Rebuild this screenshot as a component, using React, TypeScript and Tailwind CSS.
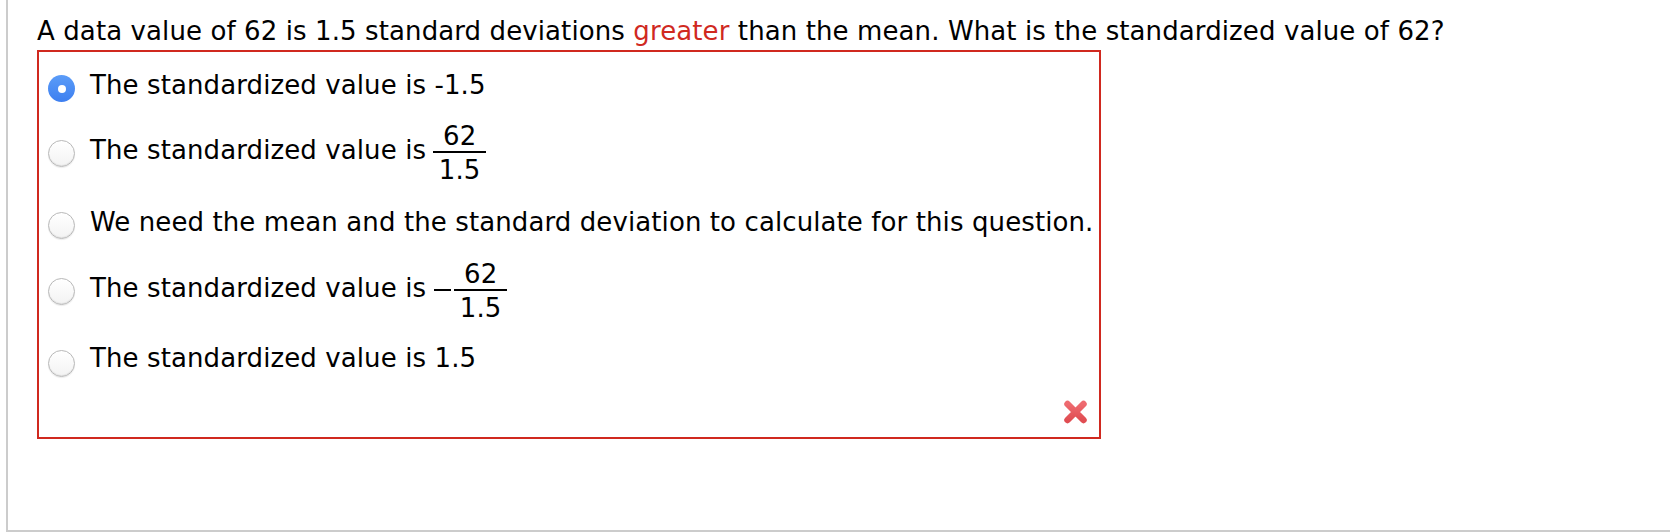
import React from "react";

function Radio({ checked }: { checked?: boolean }) {
  if (checked) {
    return (
      <span className="flex h-[27px] w-[27px] shrink-0 items-center justify-center rounded-full bg-gradient-to-b from-[#5b9cf8] to-[#3d7ff0]">
        <span className="h-[8px] w-[8px] rounded-full bg-white" />
      </span>
    );
  }
  return (
    <span className="block h-[27px] w-[27px] shrink-0 rounded-full border border-[#b8b8b8] bg-gradient-to-b from-white to-[#f3f3f3] shadow-[inset_0_-1px_1px_rgba(0,0,0,0.08),0_1px_1px_rgba(0,0,0,0.08)]" />
  );
}

function Fraction() {
  return (
    <span className="flex flex-col items-center">
      <span className="leading-[30px]">62</span>
      <span className="h-[2px] w-[53px] bg-black" />
      <span className="mt-[2px] leading-[30px]">1.5</span>
    </span>
  );
}

export default function App() {
  return (
    <div
      className="h-[532px] w-full bg-white text-[26px] tracking-[0.1px] text-black"
      style={{ fontFamily: '"DejaVu Sans", Verdana, sans-serif' }}
    >
      <div className="ml-[6px] h-[532px] w-[1664px] border-b-2 border-l-2 border-[#cccccc] pl-[29px] pt-[16px]">
        <p className="leading-[30px] whitespace-nowrap">
          A data value of 62 is 1.5 standard deviations{" "}
          <span className="text-[#d0291f]">greater</span> than the mean. What is the standardized value of 62?
        </p>
        <div className="mt-[4px] flex h-[389px] w-[1064px] flex-col border-2 border-[#d0291f] pl-[9px] pt-[18px]">
          {/* Row 1 */}
          <div className="flex items-start">
            <span className="mt-[5px]">
              <Radio checked />
            </span>
            <span className="ml-[15px] leading-[30px]">The standardized value is -1.5</span>
          </div>
          {/* Row 2 */}
          <div className="mt-[19px] flex items-start">
            <span className="mt-[19px]">
              <Radio />
            </span>
            <span className="ml-[15px] mt-[14px] leading-[30px]">The standardized value is</span>
            <span className="ml-[7px]">
              <Fraction />
            </span>
          </div>
          {/* Row 3 */}
          <div className="mt-[22px] flex items-start">
            <span className="mt-[5px]">
              <Radio />
            </span>
            <span className="ml-[15px] leading-[30px]">
              We need the mean and the standard deviation to calculate for this question.
            </span>
          </div>
          {/* Row 4 */}
          <div className="mt-[20px] flex items-start">
            <span className="mt-[19px]">
              <Radio />
            </span>
            <span className="ml-[15px] mt-[14px] leading-[30px]">The standardized value is</span>
            <span className="ml-[8px] mt-[30px] h-[2px] w-[17px] bg-black" />
            <span className="ml-[3px]">
              <Fraction />
            </span>
          </div>
          {/* Row 5 */}
          <div className="mt-[20px] flex items-start">
            <span className="mt-[7px]">
              <Radio />
            </span>
            <span className="ml-[15px] leading-[30px]">The standardized value is 1.5</span>
          </div>
          <div className="mt-[22px] flex justify-end pr-[11px]">
            <svg width="25" height="26" viewBox="0 0 25 26" className="blur-[0.5px]">
              <defs>
                <linearGradient id="xg" x1="0" y1="0" x2="0" y2="1">
                  <stop offset="0" stopColor="#ee6b70" />
                  <stop offset="1" stopColor="#e04d52" />
                </linearGradient>
              </defs>
              <path
                d="M4.5 5 L20.5 21 M20.5 5 L4.5 21"
                stroke="url(#xg)"
                strokeWidth="6.5"
                strokeLinecap="round"
                fill="none"
              />
            </svg>
          </div>
        </div>
      </div>
    </div>
  );
}
